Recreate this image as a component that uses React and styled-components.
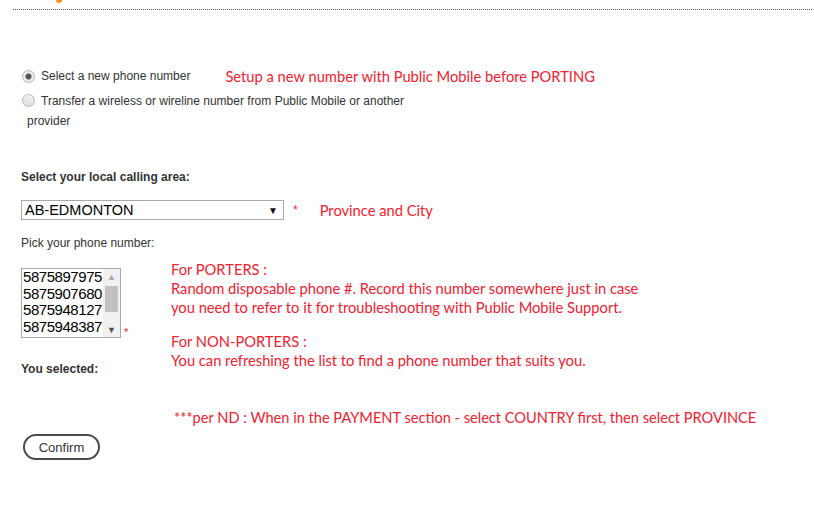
import styled, { createGlobalStyle } from 'styled-components'

const GlobalStyle = createGlobalStyle`
  html, body {
    margin: 0;
    padding: 0;
    background: #fff;
  }
  body {
    font-family: "Liberation Sans", Arial, sans-serif;
    font-size: 12px;
    color: #333;
  }
`

const numbers = ['5875897975', '5875907680', '5875948127', '5875948387']

function App() {
  return (
    <Page>
      <GlobalStyle />
      <TitleStrip>
        <TitleTail />
      </TitleStrip>

      <Form>
        <Options>
          <OptionRow>
            <Radio checked />
            <OptionText>Select a new phone number</OptionText>
            <Note $inline>Setup a new number with Public Mobile before PORTING</Note>
          </OptionRow>
          <WrapOption>
            <Radio />
            <OptionText>Transfer a wireless or wireline number from Public Mobile or another provider</OptionText>
          </WrapOption>
        </Options>

        <Label $bold>Select your local calling area:</Label>
        <SelectRow>
          <Select>
            <span>AB-EDMONTON</span>
            <Arrow>▼</Arrow>
          </Select>
          <Required>*</Required>
          <Note>Province and City</Note>
        </SelectRow>

        <Label>Pick your phone number:</Label>

        <PickGrid>
          <PickLeft>
            <ListRow>
              <ListBox>
                <Items>
                  {numbers.map((n) => (
                    <Item key={n}>{n}</Item>
                  ))}
                </Items>
                <Scrollbar>
                  <ScrollArrow $faded>▲</ScrollArrow>
                  <Track>
                    <Thumb />
                  </Track>
                  <ScrollArrow>▼</ScrollArrow>
                </Scrollbar>
              </ListBox>
              <Required $small>*</Required>
            </ListRow>
            <Label $bold $tight>You selected:</Label>
          </PickLeft>

          <Notes>
            <Note>For PORTERS :</Note>
            <Note>Random disposable phone #. Record this number somewhere just in case</Note>
            <Note>you need to refer to it for troubleshooting with Public Mobile Support.</Note>
            <Gap />
            <Note>For NON-PORTERS :</Note>
            <Note>You can refreshing the list to find a phone number that suits you.</Note>
          </Notes>
        </PickGrid>

        <Footnote>***per ND : When in the PAYMENT section - select COUNTRY first, then select PROVINCE</Footnote>

        <ConfirmButton type="button">Confirm</ConfirmButton>
      </Form>
    </Page>
  )
}

export default App

const Page = styled.div`
  width: 814px;
  height: 509px;
  overflow: hidden;
`

const TitleStrip = styled.div`
  margin-left: 13px;
  width: 799px;
  height: 9px;
  border-bottom: 1px dotted #555;
  position: relative;
`

const TitleTail = styled.span`
  position: absolute;
  left: 43px;
  top: 0;
  width: 6px;
  height: 3px;
  border-radius: 0 0 3px 3px;
  background: #f7941d;
`

const Form = styled.div`
  padding: 58px 0 0 21px;
`

const Options = styled.div`
  display: flex;
  flex-direction: column;
  gap: 7px;
  margin-bottom: 39px;
`

const OptionRow = styled.div`
  display: flex;
  align-items: center;
  height: 16px;
`

const WrapOption = styled.div`
  width: 400px;
  line-height: 20px;
  padding-left: 6px;
`

const Radio = styled.span`
  display: inline-block;
  box-sizing: border-box;
  width: 13px;
  height: 13px;
  margin: 0 6px 0 1px;
  border-radius: 50%;
  border: 1px solid #b5b5b5;
  background: ${(p) =>
    p.checked
      ? 'radial-gradient(circle, #555 0 2.5px, #9a9a9a 3px, #e8e8e8 3.6px, #f4f4f4 100%)'
      : 'linear-gradient(#f4f4f4, #dedede)'};
  vertical-align: -2px;

  ${WrapOption} & {
    margin-left: -5px;
  }
`

const OptionText = styled.span`
  font-size: 12px;
  color: #333;
`

const Note = styled.div`
  font-family: Lato, "Open Sans", sans-serif;
  font-size: 14.7px;
  line-height: 19px;
  color: #f0212f;
  white-space: nowrap;
  margin-left: ${(p) => (p.$inline ? '35px' : '0')};
`

const Label = styled.div`
  font-size: 12px;
  font-weight: ${(p) => (p.$bold ? 700 : 400)};
  color: #333;
  line-height: 14px;
  margin-bottom: ${(p) => (p.$tight ? '0' : '16px')};
`

const SelectRow = styled.div`
  display: flex;
  align-items: center;
  margin-bottom: 16px;
`

const Select = styled.div`
  box-sizing: border-box;
  width: 263px;
  height: 20px;
  border: 1px solid #a9a9a9;
  display: flex;
  align-items: center;
  justify-content: space-between;
  padding: 0 5px 0 3px;
  font-size: 14.5px;
  color: #000;
`

const Arrow = styled.span`
  font-size: 10px;
  color: #111;
`

const Required = styled.span`
  color: #f0212f;
  font-size: ${(p) => (p.$small ? '11px' : '12px')};
  margin: ${(p) => (p.$small ? '0 0 0 3px' : '0 22px 0 9px')};
  align-self: ${(p) => (p.$small ? 'flex-end' : 'auto')};
`

const PickGrid = styled.div`
  display: grid;
  grid-template-columns: 150px 1fr;
`

const PickLeft = styled.div`
  display: flex;
  flex-direction: column;
  gap: 24px;
  padding-top: 2px;
`

const ListRow = styled.div`
  display: flex;
`

const ListBox = styled.div`
  box-sizing: border-box;
  width: 100px;
  height: 70px;
  border: 1px solid #a9a9a9;
  display: flex;
  overflow: hidden;
`

const Items = styled.div`
  flex: 1;
`

const Item = styled.div`
  font-size: 15px;
  letter-spacing: -0.45px;
  line-height: 16.7px;
  color: #000;
  padding-left: 1px;
`

const Scrollbar = styled.div`
  width: 17px;
  background: #f1f1f1;
  display: flex;
  flex-direction: column;
`

const ScrollArrow = styled.div`
  height: 15px;
  display: flex;
  align-items: center;
  justify-content: center;
  font-size: 9px;
  color: ${(p) => (p.$faded ? '#a3a3a3' : '#505050')};
`

const Track = styled.div`
  flex: 1;
  padding: 2px 2px;
`

const Thumb = styled.div`
  height: 26px;
  background: #c1c1c1;
`

const Notes = styled.div`
  margin-top: -6px;
`

const Gap = styled.div`
  height: 15px;
`

const Footnote = styled.div`
  font-family: Lato, "Open Sans", sans-serif;
  font-size: 14.6px;
  color: #f0212f;
  margin: 33px 0 0 153px;
  line-height: 18px;
  white-space: nowrap;
`

const ConfirmButton = styled.button`
  display: block;
  margin: 7px 0 0 2px;
  box-sizing: border-box;
  width: 77px;
  height: 26px;
  border: 2px solid #4a4a4a;
  border-radius: 13px;
  background: #fff;
  font-family: "Liberation Sans", Arial, sans-serif;
  font-size: 13px;
  color: #333;
  padding: 0;
`
